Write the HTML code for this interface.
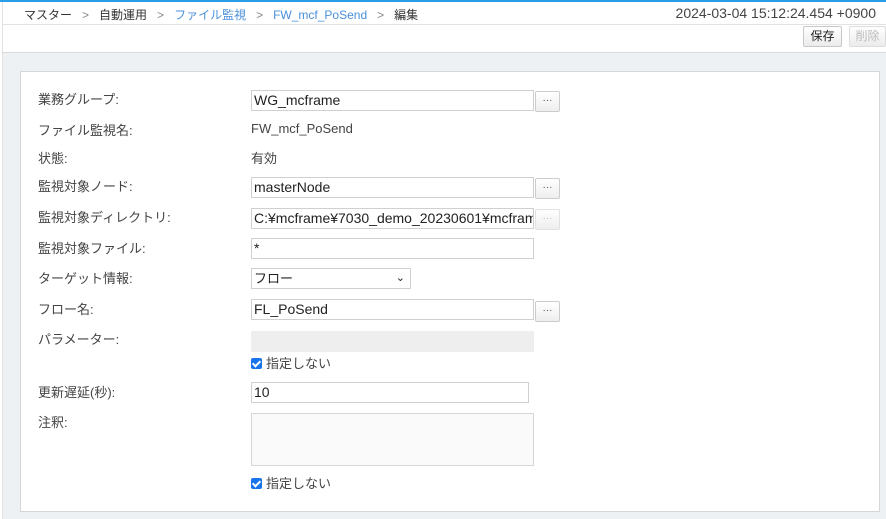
<!DOCTYPE html>
<html><head><meta charset="utf-8"><style>
*{box-sizing:border-box;margin:0;padding:0}
body{width:886px;height:519px;overflow:hidden;background:#fff;font-family:"Liberation Sans","Noto Sans CJK JP",sans-serif;color:#333;position:relative}
.a{position:absolute}
.topline{left:0;top:0;width:886px;height:2px;background:#2a9de8}
.bc{top:6px;left:24px;font-size:12px;color:#333;white-space:nowrap}
.bc span{margin-right:6px}
.bc .s{color:#888;margin:0 10px 0 4px}
.bc .l{color:#4a90d9}
.time{top:5px;right:10px;font-size:14px;color:#444}
.hl1{left:2px;top:24px;width:884px;height:1px;background:#e2e2e2}
.hl2{left:2px;top:52px;width:884px;height:1px;background:#d8d8d8}
.vl{left:2px;top:2px;width:1px;height:517px;background:#e2e2e2}
.gray{left:3px;top:53px;width:883px;height:466px;background:#eef1f4}
.panel{left:20px;top:71px;width:860px;height:441px;background:#fff;border:1px solid #d6d6d6}
.btn{top:26px;height:21px;font-size:12px;border:1px solid #c8c8c8;border-radius:2px;background:linear-gradient(#fff,#ececec);text-align:center;line-height:19px}
.lab{left:38px;font-size:13px;color:#444}
.inp{left:251px;width:283px;height:21px;border:1px solid #d0d0d0;font-size:14px;padding-left:2px;line-height:19px;color:#222;background:#fff}
.dot{left:535px;width:25px;height:21px;border:1px solid #ccc;border-radius:2px;background:linear-gradient(#fff,#eee);font-size:10px;text-align:center;line-height:17px;color:#555}
.txt{left:251px;font-size:13px;color:#444}
.cb{left:251px;font-size:13px;color:#444}
.cb i{display:inline-block;width:11px;height:11px;background:#1a73e8;border-radius:2px;vertical-align:-1px;margin-right:4px;position:relative}
.cb i:after{content:"";position:absolute;left:3px;top:1px;width:3px;height:6px;border:solid #fff;border-width:0 2px 2px 0;transform:rotate(45deg)}
</style></head><body>
<div class="a topline"></div>
<div class="a vl"></div>
<div class="a bc"><span>マスター</span><span class="s">&gt;</span><span>自動運用</span><span class="s">&gt;</span><span class="l">ファイル監視</span><span class="s">&gt;</span><span class="l">FW_mcf_PoSend</span><span class="s">&gt;</span><span>編集</span></div>
<div class="a time">2024-03-04 15:12:24.454 +0900</div>
<div class="a hl1"></div>
<div class="a btn" style="left:803px;width:39px;color:#222">保存</div>
<div class="a btn" style="left:849px;width:37px;color:#bbb;border-color:#ddd">削除</div>
<div class="a hl2"></div>
<div class="a gray"></div>
<div class="a panel"></div>

<div class="a lab" style="top:89px">業務グループ:</div>
<div class="a inp" style="top:90px">WG_mcframe</div><div class="a dot" style="top:91px">···</div>
<div class="a lab" style="top:120px">ファイル監視名:</div><div class="a txt" style="top:121px">FW_mcf_PoSend</div>
<div class="a lab" style="top:148px">状態:</div><div class="a txt" style="top:148px">有効</div>
<div class="a lab" style="top:176px">監視対象ノード:</div>
<div class="a inp" style="top:177px">masterNode</div><div class="a dot" style="top:178px">···</div>
<div class="a lab" style="top:207px">監視対象ディレクトリ:</div>
<div class="a inp" style="top:208px;overflow:hidden;white-space:nowrap">C:¥mcframe¥7030_demo_20230601¥mcframe</div><div class="a dot" style="top:209px;color:#bbb;border-color:#e2e2e2">···</div>
<div class="a lab" style="top:238px">監視対象ファイル:</div>
<div class="a inp" style="top:238px">*</div>
<div class="a lab" style="top:268px">ターゲット情報:</div>
<div class="a inp" style="top:268px;width:160px;font-size:13px">フロー<span style="position:absolute;right:5px;top:0;font-size:11px">&#x2304;</span></div>
<div class="a lab" style="top:299px">フロー名:</div>
<div class="a inp" style="top:299px">FL_PoSend</div><div class="a dot" style="top:301px">···</div>
<div class="a lab" style="top:329px">パラメーター:</div>
<div class="a" style="left:251px;top:331px;width:283px;height:21px;background:#eee"></div>
<div class="a cb" style="top:353px"><i></i>指定しない</div>
<div class="a lab" style="top:382px">更新遅延(秒):</div>
<div class="a inp" style="top:382px;width:278px">10</div>
<div class="a lab" style="top:412px">注釈:</div>
<div class="a" style="left:251px;top:413px;width:283px;height:53px;border:1px solid #d6d6d6;background:#fafafa"></div>
<div class="a cb" style="top:473px"><i></i>指定しない</div>
</body></html>
